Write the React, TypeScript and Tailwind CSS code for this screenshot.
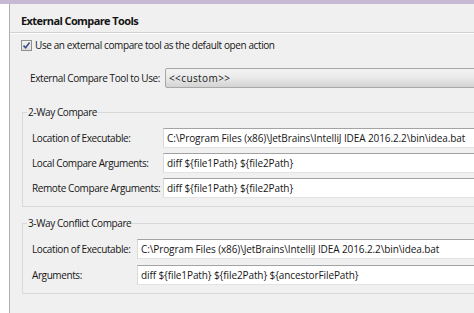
import { FC } from 'react';

const font = { fontFamily: '"Open Sans", "Noto Sans", sans-serif' };

const TextField: FC<{ value: string }> = ({ value }) => (
  <div className="flex h-[20px] min-w-0 flex-1 items-center border border-t-[#a3a3a3] border-r-[#e3e3e3] border-b-[#e3e3e3] border-l-[#dadada] bg-white pl-[3px] text-[10px] tracking-[-0.1px] whitespace-nowrap text-[#161616]">
    {value}
  </div>
);

const FieldRow: FC<{ label: string; value: string; labelWidth: string }> = ({ label, value, labelWidth }) => (
  <div className="flex h-[20px] items-center">
    <span className={`${labelWidth} shrink-0 pl-[9px] text-[10px] tracking-[-0.4px] whitespace-nowrap text-[#161616]`}>{label}</span>
    <TextField value={value} />
  </div>
);

const GroupBox: FC<{ title: string; className?: string; children: React.ReactNode }> = ({ title, className, children }) => (
  <fieldset className={`ml-[12px] w-[480px] border border-[#d8d8d8] ${className ?? ''}`}>
    <legend className="ml-[4px] px-[1px] text-[10px] leading-[16px] tracking-[-0.4px] text-[#161616]">{title}</legend>
    {children}
  </fieldset>
);

const App: FC = () => {
  return (
    <div className="flex h-[313px] w-[474px] flex-col overflow-hidden bg-white" style={font}>
      <div className="h-[4px] shrink-0 bg-[#c8b9d2]" />
      <div className="flex min-h-0 flex-1">
        <div className="w-[9px] shrink-0 bg-white" />
        <section className="flex min-w-0 flex-1 flex-col border-l border-[#b0b0b0] bg-[#f0f0f0]">
          <header className="h-[29px] shrink-0 border-b border-[#d2d2d2] pt-[9px] pl-[11px]">
            <h1 className="text-[11px] leading-[16px] font-bold tracking-[-0.6px] text-[#141414]">External Compare Tools</h1>
          </header>
          <div className="h-px bg-white" />

          <label className="mt-[3px] flex h-[16px] items-center pl-[11px] text-[10px] tracking-[-0.4px] text-[#161616]">
            <span className="mr-[3px] flex h-[11px] w-[11px] items-center justify-center border border-[#8f8f8f] bg-gradient-to-b from-[#f4f4f4] to-[#dedede]">
              <svg viewBox="0 0 9 9" className="h-[9px] w-[9px]">
                <path d="M1.5 4.6 L3.6 6.8 L7.6 1.6" fill="none" stroke="#40508a" strokeWidth="1.6" />
              </svg>
            </span>
            Use an external compare tool as the default open action
          </label>

          <div className="mt-[15px] flex h-[20px] w-[480px] items-center">
            <span className="w-[155px] shrink-0 pl-[20px] text-[10px] tracking-[-0.4px] whitespace-nowrap text-[#161616]">External Compare Tool to Use:</span>
            <div className="flex h-[20px] flex-1 items-center rounded-[2px] border border-[#a8a8a8] bg-gradient-to-b from-[#f3f3f3] via-[#e9e9e9] to-[#d3d3d3] pl-[3px] text-[10px] tracking-[0.4px] text-[#161616]">
              &lt;&lt;custom&gt;&gt;
            </div>
          </div>

          <GroupBox title="2-Way Compare" className="mt-[16px] pb-[8px]">
            <div className="mt-[8px] flex flex-col gap-[5px]">
              <FieldRow labelWidth="w-[140px]" label="Location of Executable:" value="C:\Program Files (x86)\JetBrains\IntelliJ IDEA 2016.2.2\bin\idea.bat" />
              <FieldRow labelWidth="w-[140px]" label="Local Compare Arguments:" value="diff ${file1Path} ${file2Path}" />
              <FieldRow labelWidth="w-[140px]" label="Remote Compare Arguments:" value="diff ${file1Path} ${file2Path}" />
            </div>
          </GroupBox>

          <GroupBox title="3-Way Conflict Compare" className="mt-[8px] pb-[8px]">
            <div className="mt-[8px] flex flex-col gap-[6px]">
              <FieldRow labelWidth="w-[114px]" label="Location of Executable:" value="C:\Program Files (x86)\JetBrains\IntelliJ IDEA 2016.2.2\bin\idea.bat" />
              <FieldRow labelWidth="w-[114px]" label="Arguments:" value="diff ${file1Path} ${file2Path} ${ancestorFilePath}" />
            </div>
          </GroupBox>
        </section>
      </div>
    </div>
  );
};

export default App;
